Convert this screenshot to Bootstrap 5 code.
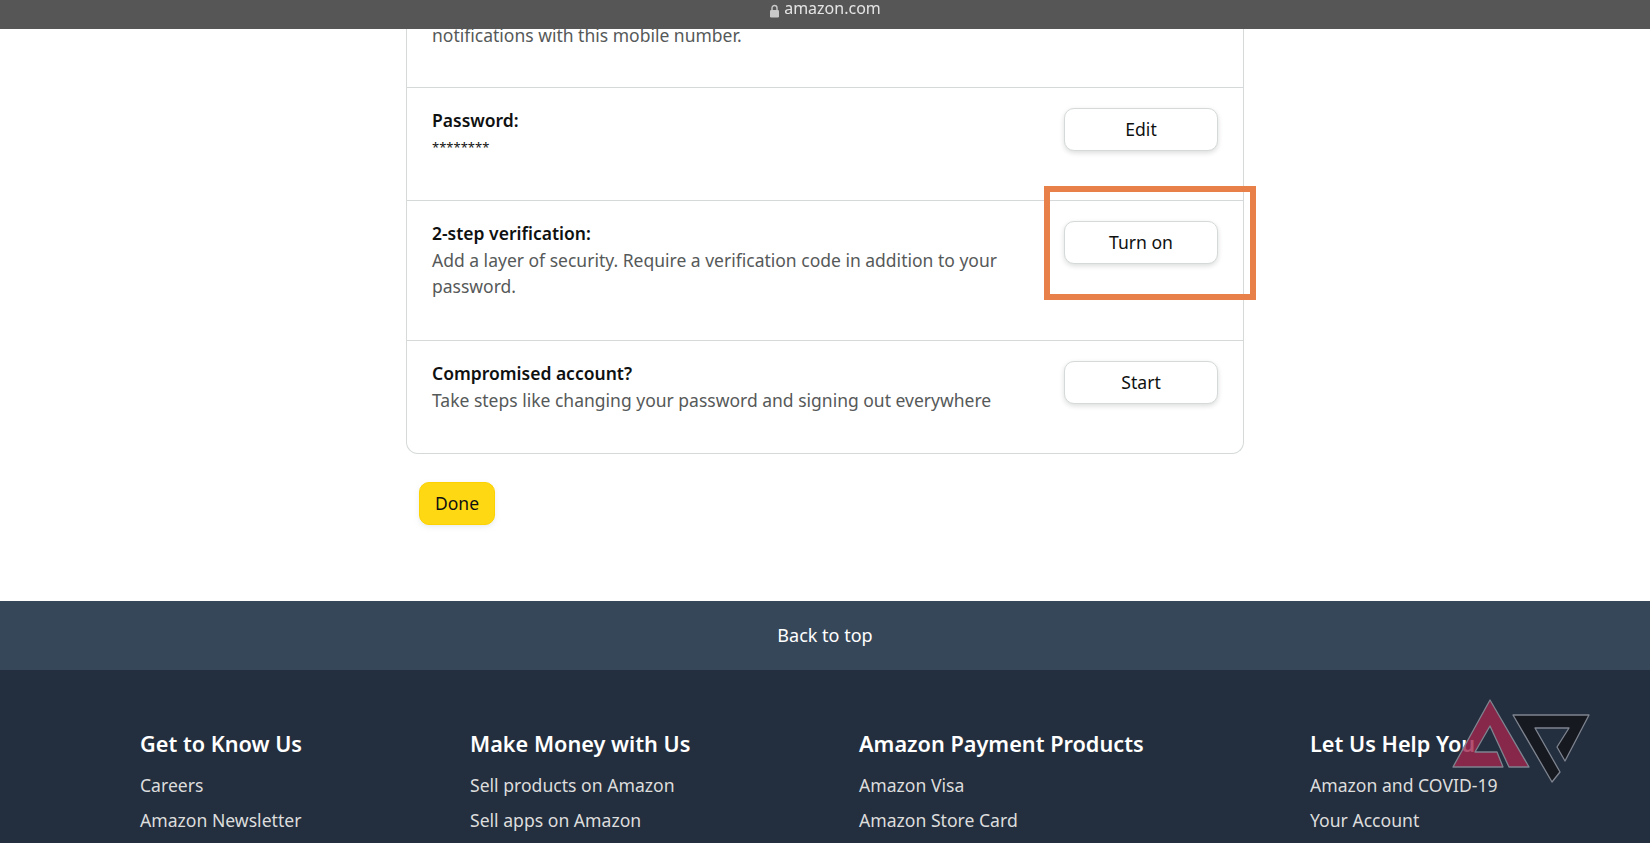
<!DOCTYPE html>
<html lang="en">
<head>
    <meta charset="UTF-8">
    <title>Login &amp; Security</title>
    <link href="https://cdn.jsdelivr.net/npm/bootstrap@5.3.3/dist/css/bootstrap.min.css" rel="stylesheet">
    <script src="https://cdn.jsdelivr.net/npm/bootstrap@5.3.3/dist/js/bootstrap.bundle.min.js"></script>
    <style>
        html, body { height: 100%; overflow: hidden; }
        body { font-family: "Noto Sans", "Liberation Sans", sans-serif; color: #0f1111; background: #fff; }
        .url-bar { position: fixed; top: 0; left: 0; right: 0; height: 29px; background: #565656; color: #e4e4e4; font-size: 16px; line-height: 17px; z-index: 5; }
        .sec-card { width: 838px; margin-left: 406px; border: 1px solid #d5d9d9; border-top: 0; border-radius: 0 0 12px 12px; }
        .sec-row { padding: 0 25px; border-bottom: 1px solid #d5d9d9; }
        .sec-row:last-child { border-bottom: 0; }
        .row-a { height: 88px; padding-top: 22px; }
        .row-b { height: 113px; padding-top: 19px; }
        .row-c { height: 140px; padding-top: 19px; }
        .row-d { height: 112px; padding-top: 19px; }
        .sec-text { width: 590px; font-size: 17.5px; line-height: 26px; color: #565959; }
        .sec-text strong { display: block; color: #0f1111; font-weight: 600; margin-bottom: 1px; }
        .stars { font-size: 13px; color: #0f1111; display: block; }
        .btn.sec-btn { width: 154px; height: 43px; margin-top: 1px; padding: 0; background: #fff; color: #0f1111; font-size: 17.6px; border: 1px solid #d5d9d9; border-radius: 10px; box-shadow: 0 2px 5px rgba(15,17,17,.15); }
        .btn.done-btn { width: 76px; height: 43px; margin: 28px 0 0 419px; padding: 0; background: #ffd814; color: #0f1111; font-size: 17.5px; border: 1px solid #fcd200; border-radius: 10px; box-shadow: 0 2px 5px rgba(213,217,217,.5); }
        .back-top { height: 69px; margin-top: 76px; background: #37475a; color: #fff; font-size: 18px; }
        .foot-main { background: #232f3e; color: #ddd; height: 200px; padding: 60px 0 0 140px; font-size: 17.6px; }
        .foot-col h3 { font-size: 21.7px; line-height: 28px; font-weight: 600; color: #fff; margin-bottom: 10px; }
        .foot-col div { line-height: 34.500px; }
        .col-1 { width: 330px; }
        .col-2 { width: 389px; }
        .col-3 { width: 451px; }
        .hl-box { position: absolute; left: 1044px; top: 186px; width: 212px; height: 114px; border: 6px solid #e8804a; pointer-events: none; }
        .ap-mark { position: absolute; left: 1440px; top: 690px; width: 160px; height: 100px; }
    </style>
</head>
<body>
    <div class="url-bar d-flex justify-content-center gap-1 pt-0">
        <svg width="11" height="14" viewBox="0 0 11 14" class="mt-1"><path d="M3 6V4a2.500 2.500 0 0 1 5 0v2" fill="none" stroke="#c9c9c9" stroke-width="1.400"/><rect x="1" y="6" width="9" height="7.500" rx="1.200" fill="#c9c9c9"/></svg>
        <span>amazon.com</span>
    </div>

    <div class="sec-card">
        <div class="sec-row row-a"><div class="sec-text">notifications with this mobile number.</div></div>
        <div class="sec-row row-b d-flex justify-content-between align-items-start">
            <div class="sec-text"><strong>Password:</strong><span class="stars">********</span></div>
            <button class="btn sec-btn">Edit</button>
        </div>
        <div class="sec-row row-c d-flex justify-content-between align-items-start">
            <div class="sec-text"><strong>2-step verification:</strong>Add a layer of security. Require a verification code in addition to your password.</div>
            <button class="btn sec-btn">Turn on</button>
        </div>
        <div class="sec-row row-d d-flex justify-content-between align-items-start">
            <div class="sec-text"><strong>Compromised account?</strong>Take steps like changing your password and signing out everywhere</div>
            <button class="btn sec-btn">Start</button>
        </div>
    </div>

    <button class="btn done-btn d-block">Done</button>

    <div class="back-top d-flex justify-content-center align-items-center">Back to top</div>
    <div class="foot-main d-flex">
        <div class="foot-col col-1"><h3>Get to Know Us</h3><div>Careers</div><div>Amazon Newsletter</div></div>
        <div class="foot-col col-2"><h3>Make Money with Us</h3><div>Sell products on Amazon</div><div>Sell apps on Amazon</div></div>
        <div class="foot-col col-3"><h3>Amazon Payment Products</h3><div>Amazon Visa</div><div>Amazon Store Card</div></div>
        <div class="foot-col"><h3>Let Us Help You</h3><div>Amazon and COVID-19</div><div>Your Account</div></div>
    </div>

    <div class="hl-box"></div>
    <svg class="ap-mark" viewBox="0 0 160 100" stroke-linejoin="round">
        <path d="M50 10 L89 77 H69 L50 36 L35 62 H57 L63 77 H13 Z" fill="#a0264e" fill-opacity=".8" stroke="#7f8490" stroke-width="1.300"/>
        <path d="M73 25 H149 L125 71 L117 57 L129 38 H95 L120 82 L112 92 Z" fill="#16191f" stroke="#7f8490" stroke-width="1.300"/>
    </svg>
</body>
</html>
